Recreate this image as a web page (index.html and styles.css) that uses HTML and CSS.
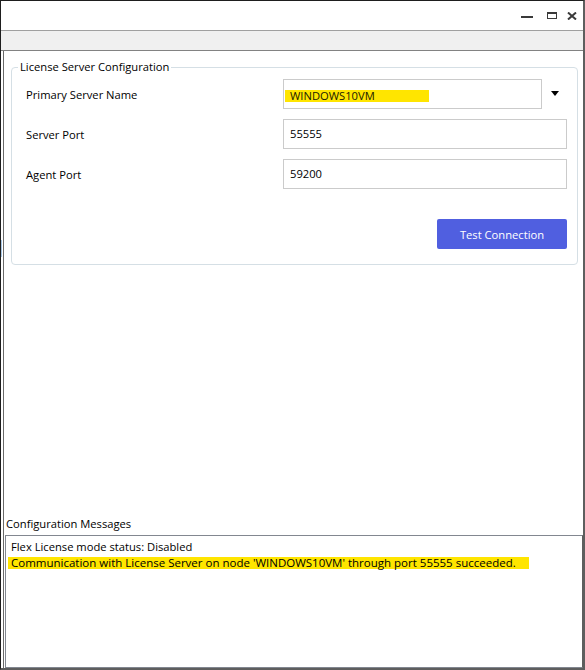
FILE: index.html
```html
<!DOCTYPE html>
<html>
<head>
<meta charset="utf-8">
<link rel="stylesheet" href="styles.css">
</head>
<body>
<div class="window">
  <div class="titlebar">
    <svg class="ic-min" width="12" height="2" viewBox="0 0 12 2"><rect width="12" height="2" fill="#3a3a3a"/></svg>
    <svg class="ic-max" width="10" height="7" viewBox="0 0 10 7"><path d="M0 0H10V7H0Z M1 2V6H9V2Z" fill="#3a3a3a" fill-rule="evenodd"/></svg>
    <svg class="ic-close" width="10" height="8" viewBox="0 0 10 8"><path d="M1 0.5L9 7.5M9 0.5L1 7.5" stroke="#3a3a3a" stroke-width="2"/></svg>
  </div>
  <div class="toolbar"></div>
  <div class="content">
    <fieldset class="group">
      <legend class="group-title">License Server Configuration</legend>
      <div class="group-body">
        <div class="form">
          <div class="label">Primary Server Name</div>
          <div class="combo-row">
            <div class="combo"><span class="hl-name">WINDOWS10VM</span></div>
            <div class="arrow-cell"><span class="arrow"></span></div>
          </div>
          <div class="label">Server Port</div>
          <div class="field">55555</div>
          <div class="label">Agent Port</div>
          <div class="field">59200</div>
        </div>
        <div class="actions"><button class="btn">Test Connection</button></div>
      </div>
    </fieldset>
    <div class="spacer"></div>
    <div class="msg-label">Configuration Messages</div>
    <div class="msg-box">
      <div class="msg">Flex License mode status: Disabled</div>
      <div class="msg-hl">Communication with License Server on node 'WINDOWS10VM' through port 55555 succeeded.</div>
    </div>
  </div>
</div>
</body>
</html>
```
FILE: styles.css
```css
html, body {
  margin: 0;
  padding: 0;
  background: #ffffff;
}
body {
  font-family: "Open Sans", "Liberation Sans", sans-serif;
  font-size: 11.2px;
  color: #000000;
}
.window {
  width: 585px;
  height: 670px;
  box-sizing: border-box;
  border-left: 1px solid #1e1e1e;
  border-top: 1px solid #1e1e1e;
  border-right: 2px solid #5e5e5e;
  border-bottom: 2px solid #5e5e5e;
  display: flex;
  flex-direction: column;
  background: #ffffff;
}
.titlebar {
  height: 29px;
  display: flex;
  align-items: center;
  justify-content: flex-end;
  padding-right: 6px;
  flex: none;
}
.ic-min { margin-right: 14px; margin-top: 2px; }
.ic-max { margin-right: 10px; }
.toolbar {
  height: 19px;
  background: #f0f0f0;
  border-top: 1px solid #a0a0a0;
  border-bottom: 1px solid #828282;
  flex: none;
}
.content {
  flex: 1;
  display: flex;
  flex-direction: column;
  margin-left: 2px;
  border-left: 1px solid #6a6a6a;
  min-height: 0;
  position: relative;
}
.content::before {
  content: "";
  position: absolute;
  left: -3px;
  top: 189px;
  width: 1px;
  height: 17px;
  background: #a9c8e6;
}
.group {
  margin: 8px 5px 0 7px;
  border: 1px solid #d5dfe5;
  border-radius: 4px;
  padding: 0;
  min-width: 0;
}
.group-title {
  margin-left: 6px;
  padding: 0 2px;
  line-height: 16px;
  font-size: 11.2px;
}
.group-body {
  padding: 4px 10px 15px 14px;
}
.form {
  display: grid;
  grid-template-columns: 257px 1fr;
  grid-auto-rows: 30px;
  row-gap: 10px;
  align-items: center;
}
.label {
  line-height: 16px;
  padding-top: 1px;
}
.combo-row {
  display: flex;
  height: 30px;
}
.combo {
  width: 259px;
  height: 30px;
  box-sizing: border-box;
  border: 1px solid #cbcbcb;
  padding: 10px 0 0 1px;
}
.hl-name {
  display: block;
  width: 139px;
  height: 12px;
  line-height: 12px;
  padding-left: 5px;
  background: #ffe500;
  color: #1a1a00;
}
.arrow-cell {
  flex: 1;
  display: flex;
  align-items: center;
  justify-content: center;
  padding-left: 1px;
}
.arrow {
  width: 0;
  height: 0;
  border-left: 4.5px solid transparent;
  border-right: 4.5px solid transparent;
  border-top: 5px solid #000000;
  margin-top: -1px;
}
.field {
  height: 30px;
  box-sizing: border-box;
  border: 1px solid #cbcbcb;
  padding-left: 6px;
  line-height: 28px;
}
.actions {
  display: flex;
  justify-content: flex-end;
  margin-top: 30px;
}
.btn {
  width: 130px;
  height: 30px;
  border: none;
  border-radius: 2px;
  background: #505fe0;
  color: #ffffff;
  font-family: "Open Sans", "Liberation Sans", sans-serif;
  font-size: 11.2px;
  padding: 0;
}
.spacer {
  flex: 1;
}
.msg-label {
  line-height: 16px;
  padding-left: 2px;
  margin-bottom: 3px;
}
.msg-box {
  height: 133px;
  box-sizing: border-box;
  border: 1px solid #828790;
  border-right-color: #5e5e5e;
  margin-left: 1px;
  padding-top: 2px;
  flex: none;
}
.msg {
  line-height: 17px;
  padding-left: 5px;
}
.msg-hl {
  width: 518px;
  height: 12px;
  line-height: 12px;
  margin: 2px 0 0 2px;
  padding-left: 3px;
  background: #ffe500;
  font-size: 11.5px;
}
```
